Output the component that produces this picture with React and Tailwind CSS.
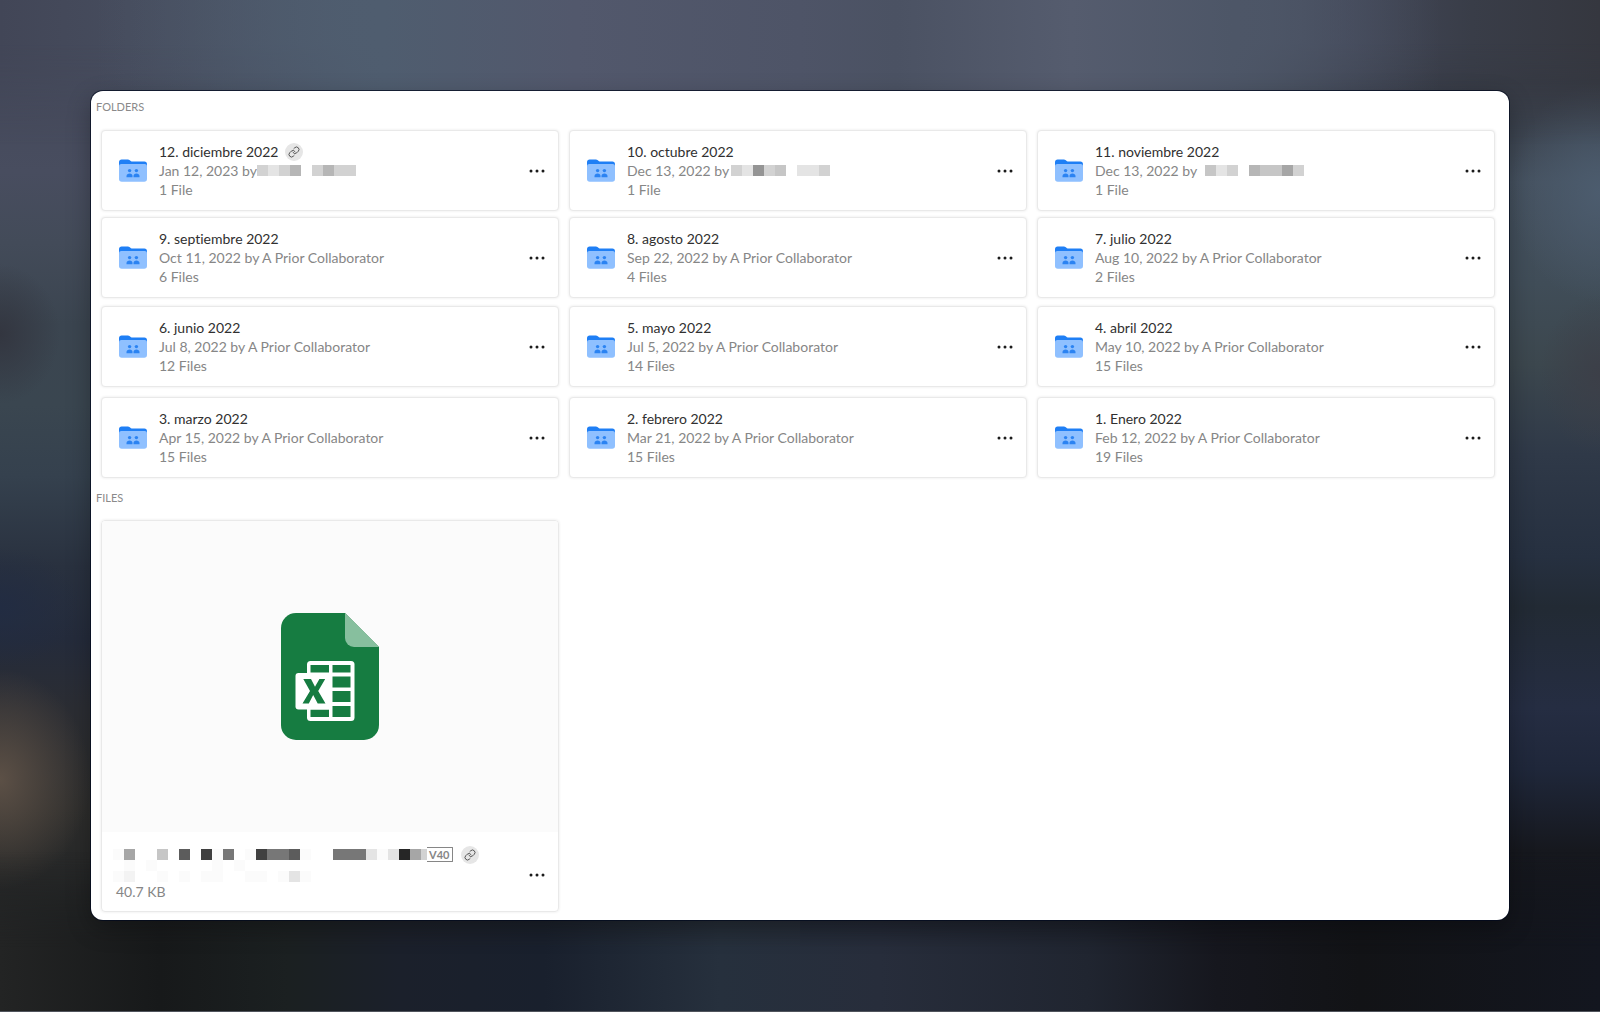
import { Link } from "lucide-react";

const cell = {
    none: "bg-transparent",
    white: "bg-[#fbfbfb]",
    faint: "bg-[#f3f3f3]",
    pale: "bg-[#e4e4e4]",
    light: "bg-[#d2d2d2]",
    soft: "bg-[#c6c6c6]",
    mid: "bg-[#b6b6b6]",
    gray: "bg-[#a6a6a6]",
    steel: "bg-[#949494]",
    dim: "bg-[#777777]",
    dark: "bg-[#5c5c5c]",
    deep: "bg-[#404040]",
    black: "bg-[#262626]",
};

const rows = [
    {
        spacing: "",
        folders: [
            {
                name: "12. diciembre 2022",
                meta: "Jan 12, 2023 by",
                count: "1 File",
                linked: true,
                mask: "light pale light mid none light mid light light",
            },
            {
                name: "10. octubre 2022",
                meta: "Dec 13, 2022 by",
                count: "1 File",
                maskSpacing: "ml-0.5",
                mask: "light pale steel light soft none pale pale light",
            },
            {
                name: "11. noviembre 2022",
                meta: "Dec 13, 2022 by",
                count: "1 File",
                maskSpacing: "ml-2",
                mask: "soft pale light none mid soft soft gray light",
            },
        ],
    },
    {
        spacing: "mt-1.5",
        folders: [
            { name: "9. septiembre 2022", meta: "Oct 11, 2022 by A Prior Collaborator", count: "6 Files" },
            { name: "8. agosto 2022", meta: "Sep 22, 2022 by A Prior Collaborator", count: "4 Files" },
            { name: "7. julio 2022", meta: "Aug 10, 2022 by A Prior Collaborator", count: "2 Files" },
        ],
    },
    {
        spacing: "mt-2",
        folders: [
            { name: "6. junio 2022", meta: "Jul 8, 2022 by A Prior Collaborator", count: "12 Files" },
            { name: "5. mayo 2022", meta: "Jul 5, 2022 by A Prior Collaborator", count: "14 Files" },
            { name: "4. abril 2022", meta: "May 10, 2022 by A Prior Collaborator", count: "15 Files" },
        ],
    },
    {
        spacing: "mt-2.5",
        folders: [
            { name: "3. marzo 2022", meta: "Apr 15, 2022 by A Prior Collaborator", count: "15 Files" },
            { name: "2. febrero 2022", meta: "Mar 21, 2022 by A Prior Collaborator", count: "15 Files" },
            { name: "1. Enero 2022", meta: "Feb 12, 2022 by A Prior Collaborator", count: "19 Files" },
        ],
    },
];

const fileMask = [
    "white gray none none soft none dark none deep white dim none white deep dim dim dark white none none dim dim dim pale white pale black gray light",
    "none white none white none none none none none white none white",
    "white faint none none white none white none white white none none white white none white pale white",
];

function Mosaic({ cells, className = "" }) {
    return (
        <span className={`flex ${className}`} aria-hidden="true">
            {cells.split(" ").map((tone, i) => (
                <span key={i} className={`w-[11px] h-[11px] ${cell[tone]}`} />
            ))}
        </span>
    );
}

function FolderIcon() {
    return (
        <svg width="28" height="24" viewBox="0 0 28 24" className="shrink-0" aria-hidden="true">
            <path
                d="M0 3.2C0 1.6 1.1.6 2.6.6h6.200c.9 0 1.400.2 2 .7l1.200.9c.4.3.9.4 1.500.4h11.900c1.600 0 2.600 1 2.600 2.600V12H0z"
                fill="#1f7ff5"
            />
            <path
                d="M0 7.200C0 5.800.9 5 2.300 5h23.400C27.100 5 28 5.800 28 7.200v12.900c0 1.700-1.100 2.700-2.700 2.700H2.700C1.100 22.800 0 21.800 0 20.100z"
                fill="#8fc0ff"
            />
            <g fill="#2b83f2">
                <circle cx="10.600" cy="11.600" r="1.700" />
                <circle cx="17.400" cy="11.600" r="1.700" />
                <path d="M7.500 18.200v-1.300c0-1.600 1.300-2.500 3.100-2.500s2.900.9 2.900 2.500v1.300z" />
                <path d="M14.500 18.200v-1.300c0-1.600 1.200-2.500 2.900-2.500s3.100.9 3.100 2.500v1.300z" />
            </g>
        </svg>
    );
}

function LinkBadge() {
    return (
        <button
            aria-label="Shared link"
            className="w-[18px] h-[18px] rounded-full bg-[#e6e6e6] flex items-center justify-center shrink-0"
        >
            <Link size={12} strokeWidth={2} color="#555" />
        </button>
    );
}

function MoreButton({ label }) {
    return (
        <button aria-label={`More options for ${label}`} className="shrink-0 h-6 flex items-center">
            <svg width="16" height="4" viewBox="0 0 16 4" fill="#1b1b1b">
                <circle cx="2" cy="2" r="1.500" />
                <circle cx="8" cy="2" r="1.500" />
                <circle cx="14" cy="2" r="1.500" />
            </svg>
        </button>
    );
}

function FolderCard({ folder }) {
    return (
        <article className="h-[81px] flex items-center bg-white border border-[#e9e9e9] rounded shadow-[0_0_3px_rgba(0,0,0,0.09)] pl-[17px] pr-[13px]">
            <FolderIcon />
            <div className="ml-3 flex-1 min-w-0 text-sm leading-[19px] text-[#868686]">
                <div className="flex items-center gap-[7px]">
                    <h3 className="text-[#303030]">{folder.name}</h3>
                    {folder.linked && <LinkBadge />}
                </div>
                <div className="flex items-center">
                    <p className="whitespace-nowrap">{folder.meta}</p>
                    {folder.mask && <Mosaic cells={folder.mask} className={folder.maskSpacing} />}
                </div>
                <p>{folder.count}</p>
            </div>
            <MoreButton label={folder.name} />
        </article>
    );
}

function ExcelIcon() {
    return (
        <svg width="98" height="127" viewBox="0 0 98 127" aria-hidden="true">
            <path
                d="M15 0h49l34 34v78a15 15 0 0 1-15 15H15a15 15 0 0 1-15-15V15A15 15 0 0 1 15 0z"
                fill="#167c41"
            />
            <path d="M64 0l34 34H73a9 9 0 0 1-9-9z" fill="#87bf9e" />
            <rect x="26" y="48" width="47.500" height="60" rx="3.500" fill="#fff" />
            <g fill="#167c41">
                <rect x="29.500" y="52" width="18.500" height="7.500" />
                <rect x="51.500" y="52" width="18" height="7.500" />
                <rect x="51.500" y="63.500" width="18" height="11" />
                <rect x="51.500" y="78" width="18" height="11" />
                <rect x="51.500" y="93" width="18" height="11" />
                <rect x="29.500" y="96.500" width="18.500" height="7.500" />
            </g>
            <rect x="14.500" y="60" width="36" height="36.500" rx="3" fill="#fff" />
            <path
                d="M22.300 66h7.700l4 7.800 4.400-7.800h5.800l-7 11.900 7.300 12.600h-7.800l-4.500-8.400-4.400 8.400h-6.300l7.500-12.500z"
                fill="#167c41"
            />
        </svg>
    );
}

function Backdrop() {
    return (
        <div className="absolute inset-0 overflow-hidden bg-[#2a303c]" aria-hidden="true">
            <div className="absolute inset-y-0 left-0 w-1/2 bg-[linear-gradient(#424657_0%,#484d5f_17%,#434b59_24%,#3b4550_32%,#3a4650_40%,#35414e_47%,#29313f_56%,#242b3b_63%,#2b2d33_70%,#2d2d2c_80%,#232526_90%,#191b1f_100%)]" />
            <div className="absolute inset-y-0 right-0 w-1/2 bg-[linear-gradient(#3b3c46_0%,#343842_8%,#45515f_18%,#404d58_28%,#3c474e_36%,#2f3948_45%,#263040_55%,#222a34_60%,#252d42_70%,#1f273a_76%,#16181e_84%,#11131a_100%)]" />
            <div className="absolute inset-0 bg-[radial-gradient(60px_70px_at_0_33%,#333640,transparent),radial-gradient(90px_110px_at_0_77%,#5c5046,transparent),radial-gradient(80px_60px_at_0_60%,#222c42,transparent),radial-gradient(90px_110px_at_100%_19%,#4c5c6e,transparent),radial-gradient(60px_80px_at_100%_37%,#3c3f48,transparent)]" />
            <div className="absolute inset-x-0 top-0 h-36 bg-[radial-gradient(200px_70px_at_55%_65%,#444957,transparent),linear-gradient(to_right,#424657_0%,#484f60_12%,#4f5d6f_24%,#52586c_36%,#50566a_50%,#515a6c_60%,#555c6e_67%,#515a6b_75%,#434859_84%,#393d48_92%,#35373f_100%)] [mask-image:linear-gradient(black_30%,transparent)]" />
            <div className="absolute inset-x-0 top-0 h-28 bg-[linear-gradient(to_right,transparent_6%,#4f5d6f_24%,#52586c_36%,#4e5467_50%,#4b5263_56%,#555c6e_67%,#4d5667_77%,transparent_90%)]" />
            <div className="absolute inset-x-0 bottom-0 h-40 bg-[linear-gradient(to_right,#232424_0%,#17191a_10%,#1b2021_18%,#1b202b_25%,#19202d_34%,#26303d_45%,#272d3b_55%,#202530_68%,#16171e_76%,#121316_85%,#13161f_100%)] [mask-image:linear-gradient(transparent,black_60%)]" />
            <div className="absolute inset-x-0 bottom-0 h-px bg-[#50545c]" />
        </div>
    );
}

export default function App() {
    return (
        <div className="relative min-h-screen px-[91px] py-[91px] font-['Lato',sans-serif] [font-variant-ligatures:none]">
            <Backdrop />

            <main className="relative bg-white rounded-xl pl-[10px] pr-[14px] pb-2 shadow-[0_0_0_1px_rgba(0,8,30,0.7),0_8px_24px_rgba(0,0,0,0.3)]">
                <h2 className="-ml-[5px] pt-2 text-[11px] leading-4 text-[#8a8a8a]">FOLDERS</h2>

                <section className="mt-[15px]">
                    {rows.map((row, i) => (
                        <div key={i} className={`grid grid-cols-3 gap-[10px] ${row.spacing}`}>
                            {row.folders.map((folder) => (
                                <FolderCard key={folder.name} folder={folder} />
                            ))}
                        </div>
                    ))}
                </section>

                <h2 className="-ml-[5px] mt-3 text-[11px] leading-4 text-[#8a8a8a]">FILES</h2>

                <section className="mt-[14px] grid grid-cols-3 gap-[10px]">
                    <article className="border border-[#e9e9e9] rounded shadow-[0_0_3px_rgba(0,0,0,0.09)] overflow-hidden">
                        <div className="h-[311px] bg-[#fbfbfb] flex items-center justify-center">
                            <ExcelIcon />
                        </div>
                        <div className="flex items-center pt-[17px] pb-[10px] pl-[11px] pr-[13px]">
                            <div className="flex-1 min-w-0">
                                <div className="flex items-center h-[11px]">
                                    <Mosaic cells={fileMask[0]} />
                                    <span className="relative -ml-[5px] pl-0.5 pr-[3px] bg-white text-[11px] leading-[13px] font-bold text-[#868686] border border-l-0 border-[#868686] rounded-r-[1px]">
                                        V40
                                    </span>
                                    <span className="ml-2">
                                        <LinkBadge />
                                    </span>
                                </div>
                                <Mosaic cells={fileMask[1]} />
                                <Mosaic cells={fileMask[2]} />
                                <p className="ml-[3px] text-sm leading-[19px] text-[#868686]">40.7 KB</p>
                            </div>
                            <MoreButton label="file" />
                        </div>
                    </article>
                </section>
            </main>
        </div>
    );
}
